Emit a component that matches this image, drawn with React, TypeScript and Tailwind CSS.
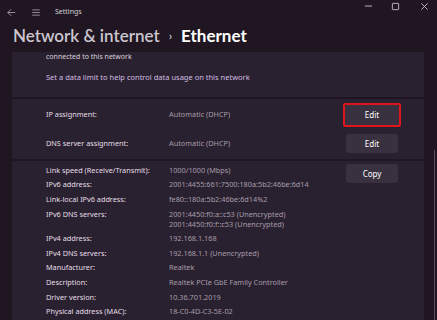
export default function App() {
  const details: [string, string[]][] = [
    ["Link speed (Receive/Transmit):", ["1000/1000 (Mbps)"]],
    ["IPv6 address:", ["2001:4455:661:7500:180a:5b2:46be:6d14"]],
    ["Link-local IPv6 address:", ["fe80::180a:5b2:46be:6d14%2"]],
    ["IPv6 DNS servers:", ["2001:4450:f0:a::c53 (Unencrypted)", "2001:4450:f0:f::c53 (Unencrypted)"]],
    ["IPv4 address:", ["192.168.1.168"]],
    ["IPv4 DNS servers:", ["192.168.1.1 (Unencrypted)"]],
    ["Manufacturer:", ["Realtek"]],
    ["Description:", ["Realtek PCIe GbE Family Controller"]],
    ["Driver version:", ["10.36.701.2019"]],
    ["Physical address (MAC):", ["18-C0-4D-C3-5E-02"]],
  ];

  return (
    <div className="h-[320px] w-[437px] overflow-hidden bg-[#1f1621] font-['Noto_Sans',sans-serif] text-[#e4dee6]">
      {/* title bar */}
      <div className="flex h-[24px] items-center">
        <svg viewBox="0 0 12 12" className="ml-[7px] h-[9px] w-[9px] text-[#b9b0bd]" fill="none" stroke="currentColor" strokeWidth="1">
          <path d="M11 6H1M5.5 1.5 1 6l4.5 4.5" />
        </svg>
        <svg viewBox="0 0 12 12" className="ml-[15px] h-[9px] w-[10px] text-[#b9b0bd]" fill="none" stroke="currentColor" strokeWidth="1">
          <path d="M1 2.5h10M1 6h10M1 9.5h10" />
        </svg>
        <span className="ml-[14px] text-[7px] text-[#d6cfd9]">Settings</span>
        <div className="ml-auto mt-[2px] flex items-center self-start text-[#c7bfca]">
          <svg viewBox="0 0 10 10" className="mr-[18px] h-[9px] w-[9px]" fill="none" stroke="currentColor" strokeWidth="1">
            <path d="M1 4.5h8" />
          </svg>
          <svg viewBox="0 0 10 10" className="mr-[20px] h-[9px] w-[9px]" fill="none" stroke="currentColor" strokeWidth="1">
            <rect x="1.5" y="1.5" width="7" height="7" rx="0.5" />
          </svg>
          <svg viewBox="0 0 10 10" className="mr-[8px] h-[9px] w-[9px]" fill="none" stroke="currentColor" strokeWidth="1">
            <path d="M1.5 1.5l7 7M8.5 1.5l-7 7" />
          </svg>
        </div>
      </div>

      {/* header */}
      <div className="flex h-[23px] items-center pl-[13px] font-['Lato',sans-serif] text-[17px] font-semibold leading-none">
        <span className="text-[#cdc6d0]">Network &amp; internet</span>
        <span className="mx-[9px] text-[12px] text-[#cdc6d0]">›</span>
        <span className="font-bold text-white">Ethernet</span>
      </div>

      <div className="mt-[5px] flex">
        <div className="flex w-[424px] flex-col gap-[2px] pl-[12px]">
          {/* metered section */}
          <div className="h-[45px] bg-[#2a2130] pl-[34px] text-[7px]">
            <div className="text-[#d9d2dc]">connected to this network</div>
            <div className="mt-[9px] text-[7.5px] text-[#d2bde0]">Set a data limit to help control data usage on this network</div>
          </div>

          {/* assignments */}
          <div className="flex h-[60px] flex-col bg-[#2a2130] pl-[34px] text-[7.3px]">
            <div className="flex h-[31px] items-center">
              <span className="w-[123px]">IP assignment:</span>
              <span className="text-[#a69ca9]">Automatic (DHCP)</span>
              <button className="ml-auto mr-[23px] flex h-[24px] w-[58px] items-center justify-center rounded-[2px] border-2 border-[#e0141c] bg-[#3a3140] text-[8px] text-white">
                Edit
              </button>
            </div>
            <div className="flex h-[27px] items-center">
              <span className="w-[123px]">DNS server assignment:</span>
              <span className="text-[#a69ca9]">Automatic (DHCP)</span>
              <button className="ml-auto mr-[26px] flex h-[19px] w-[52px] items-center justify-center rounded-[3px] bg-[#3a3140] text-[8px] text-white">
                Edit
              </button>
            </div>
          </div>

          {/* properties */}
          <div className="relative bg-[#2a2130] pl-[34px] pt-[1.5px] pb-[4px] text-[7.3px] leading-[10px]">
            <button className="absolute right-[26px] top-[3px] flex h-[19px] w-[52px] items-center justify-center rounded-[3px] bg-[#3a3140] text-[8px] text-white">
              Copy
            </button>
            {details.map(([label, values]) => (
              <div key={label} className="flex py-[2.3px]">
                <span className="w-[123px]">{label}</span>
                <div className="flex flex-col text-[#a69ca9]">
                  {values.map((v) => (
                    <span key={v}>{v}</span>
                  ))}
                </div>
              </div>
            ))}
          </div>
        </div>
        {/* scrollbar */}
        <div className="ml-[10px] mt-[98px] h-[200px] w-[1px] bg-[#5a5060]" />
      </div>
    </div>
  );
}
